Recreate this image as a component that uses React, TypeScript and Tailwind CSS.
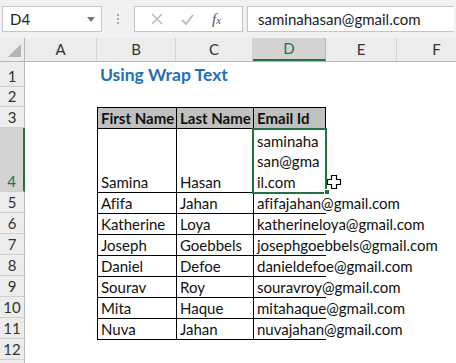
import React from 'react';

const cols = [
  { key: 'A', w: 72 },
  { key: 'B', w: 79 },
  { key: 'C', w: 77 },
  { key: 'D', w: 73 },
  { key: 'E', w: 71 },
  { key: 'F', w: 80 },
];

const people = [
  ['Afifa', 'Jahan', 'afifajahan@gmail.com'],
  ['Katherine', 'Loya', 'katherineloya@gmail.com'],
  ['Joseph', 'Goebbels', 'josephgoebbels@gmail.com'],
  ['Daniel', 'Defoe', 'danieldefoe@gmail.com'],
  ['Sourav', 'Roy', 'souravroy@gmail.com'],
  ['Mita', 'Haque', 'mitahaque@gmail.com'],
  ['Nuva', 'Jahan', 'nuvajahan@gmail.com'],
];

const font = { fontFamily: 'Lato, "Open Sans", sans-serif' };

function RowHead({ n, h, selected }: { n?: number; h: number; selected?: boolean }) {
  return (
    <div
      className={
        'w-[25px] shrink-0 flex items-end justify-center border-b border-[#d0d0d0] text-[15px] leading-[20px] ' +
        (selected
          ? 'bg-[#d3d3d3] text-[#217346] border-r-2 border-r-[#217346]'
          : 'bg-[#ececec] text-[#333] border-r border-r-[#b8b8b8]')
      }
      style={{ height: h }}
    >
      {n}
    </div>
  );
}

function Cell({ w, className = '', children }: { w: number; className?: string; children?: React.ReactNode }) {
  return (
    <div className={'shrink-0 flex flex-col justify-end pl-[3px] text-[15px] leading-[20.5px] text-[#111] ' + className} style={{ width: w }}>
      {children}
    </div>
  );
}

export default function App() {
  return (
    <div className="w-[456px] h-[363px] overflow-hidden bg-white relative [font-variant-ligatures:none]" style={font}>
      {/* formula bar */}
      <div className="h-[38px] bg-[#f1f1f1] flex items-center px-[2px] gap-0">
        <div className="w-[100px] h-[26px] bg-white border border-[#c6c6c6] flex items-center justify-between pl-[7px] pr-[6px]">
          <span className="text-[15px] text-[#222]">D4</span>
          <svg width="8" height="5" viewBox="0 0 8 5"><path d="M0 0h8L4 5z" fill="#777" /></svg>
        </div>
        <div className="w-[32px] flex flex-col items-center gap-[2px]">
          <span className="w-[2px] h-[2px] bg-[#aaa]" />
          <span className="w-[2px] h-[2px] bg-[#aaa]" />
          <span className="w-[2px] h-[2px] bg-[#aaa]" />
        </div>
        <div className="w-[109px] h-[26px] bg-white border border-[#c6c6c6] flex items-center">
          <svg className="ml-[16px]" width="12" height="12" viewBox="0 0 12 12"><path d="M1 1l10 10M11 1L1 11" stroke="#bbb" strokeWidth="1.6" /></svg>
          <svg className="ml-[18px]" width="13" height="11" viewBox="0 0 13 11"><path d="M1 6l4 4 7-9" stroke="#bbb" strokeWidth="1.8" fill="none" /></svg>
          <span className="ml-[18px] text-[15px] italic text-[#555]" style={{ fontFamily: '"Liberation Serif", serif' }}>
            f<span className="text-[11px]">x</span>
          </span>
        </div>
        <div className="ml-[4px] flex-1 h-[26px] bg-white border border-[#c6c6c6] border-r-0 flex items-center pl-[10px] text-[15px] text-[#222]">
          saminahasan@gmail.com
        </div>
      </div>

      {/* column headers */}
      <div className="flex h-[24px] bg-[#ececec] border-b border-[#b8b8b8]">
        <div className="w-[25px] shrink-0 border-r border-[#b8b8b8] relative">
          <svg className="absolute left-[8px] top-[6px]" width="13" height="13" viewBox="0 0 13 13"><path d="M13 0v13H0z" fill="#b5b5b5" /></svg>
        </div>
        {cols.map((c) => (
          <div
            key={c.key}
            className={
              'shrink-0 flex items-center justify-center text-[15px] border-r ' +
              (c.key === 'D'
                ? 'bg-[#d3d3d3] text-[#217346] border-[#b8b8b8] border-b-2 border-b-[#217346]'
                : 'text-[#333] border-[#d4d4d4]')
            }
            style={{ width: c.w }}
          >
            {c.key}
          </div>
        ))}
      </div>

      {/* row 1 */}
      <div className="flex">
        <RowHead n={1} h={25} />
        <div className="flex items-end pl-[3px]" style={{ marginLeft: 72 }}>
          <span className="text-[17.5px] font-bold text-[#1f70b8] leading-[24px]">Using Wrap Text</span>
        </div>
      </div>

      {/* row 2 */}
      <div className="flex">
        <RowHead n={2} h={20} />
      </div>

      {/* row 3 */}
      <div className="flex h-[21px]">
        <RowHead n={3} h={21} />
        <Cell w={72} />
        <Cell w={79} className="bg-[#c0c0c0] border-l border-t border-black font-bold">First Name</Cell>
        <Cell w={77} className="bg-[#c0c0c0] border-l border-t border-black font-bold">Last Name</Cell>
        <Cell w={73} className="bg-[#c0c0c0] border-l border-t border-r border-black font-bold">Email Id</Cell>
      </div>

      {/* row 4 */}
      <div className="flex h-[64px]">
        <RowHead n={4} h={64} selected />
        <Cell w={72} />
        <Cell w={79} className="border-l border-t border-black">Samina</Cell>
        <Cell w={77} className="border-l border-t border-black">Hasan</Cell>
        <div className="relative shrink-0 w-[73px] border-l border-t border-black">
          <div className="absolute -left-[2px] -top-[1px] w-[75px] h-[66px] border-2 border-[#217346] flex flex-col justify-end pl-[3px] text-[15px] leading-[20.5px] text-[#111]">
            <span>saminaha</span>
            <span>san@gma</span>
            <span>il.com</span>
          </div>
          <div className="absolute -right-[4px] -bottom-[3px] w-[6px] h-[6px] bg-[#217346] border border-white" />
        </div>
      </div>

      {/* rows 5-11 */}
      {people.map((p, i) => (
        <div key={p[0]} className="flex h-[21px]">
          <RowHead n={i + 5} h={21} />
          <Cell w={72} />
          <Cell w={79} className="border-l border-t border-black">{p[0]}</Cell>
          <Cell w={77} className="border-l border-t border-black">{p[1]}</Cell>
          <Cell w={73} className="border-l border-t border-black overflow-visible whitespace-nowrap">{p[2]}</Cell>
        </div>
      ))}

      {/* row 12 */}
      <div className="flex h-[21px]">
        <RowHead n={12} h={21} />
        <Cell w={72} />
        <Cell w={79} className="border-t border-black" />
        <Cell w={77} className="border-t border-black" />
        <Cell w={73} className="border-t border-black" />
      </div>
      <div className="flex">
        <RowHead h={21} />
      </div>

      {/* cursor */}
      <svg className="absolute left-[326px] top-[174px]" width="16" height="16" viewBox="0 0 16 16">
        <path d="M5.5 1.5h5v4h4v5h-4v4h-5v-4h-4v-5h4z" fill="#fff" stroke="#000" strokeWidth="1.2" />
      </svg>
    </div>
  );
}
